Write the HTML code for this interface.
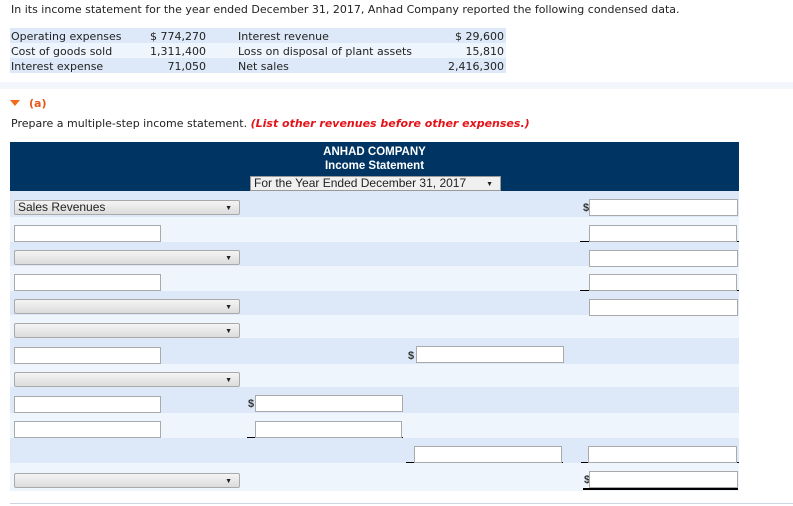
<!DOCTYPE html>
<html><head><meta charset="utf-8"><style>
*{margin:0;padding:0;box-sizing:border-box}
body{width:793px;height:506px;background:#fff;font-family:"DejaVu Sans","Liberation Sans",sans-serif;font-size:11px;color:#222;position:relative;overflow:hidden}
.a{position:absolute;white-space:nowrap}
.band{position:absolute;left:0;width:793px;top:82px;height:7px;background:#f3f7fb}
.dt{position:absolute;left:10px;width:496px;height:15px}
.r{position:absolute;left:10px;width:729px}
.sel{position:absolute;left:14px;width:226px;height:15px;border:1px solid #a9a9a9;border-radius:2px;background:linear-gradient(#f4f4f4,#dcdcdc);font-family:"Liberation Sans",sans-serif;font-size:12px;line-height:13px;padding-left:3px}
.sel:after{content:"▼";position:absolute;right:7px;top:1px;font-size:7px}
.in{position:absolute;height:17px;border:1px solid #aaa;background:#fff}
.d{position:absolute;font-size:11px;font-family:"Liberation Sans",sans-serif;font-weight:bold;color:#333}
.u{position:absolute;height:1px;background:#000}
</style></head><body>
<div class="a" style="left:11px;top:3px">In its income statement for the year ended December 31, 2017, Anhad Company reported the following condensed data.</div>
<div class="dt" style="top:28px;background:#dde9f8"></div>
<div class="dt" style="top:43px;background:#eef5fd"></div>
<div class="dt" style="top:58px;background:#dde9f8"></div>
<div class="a" style="left:11px;top:29px;line-height:15px">Operating expenses<br>Cost of goods sold<br>Interest expense</div>
<div class="a" style="left:120px;width:86px;text-align:right;top:29px;line-height:15px">$ 774,270<br>1,311,400<br>71,050</div>
<div class="a" style="left:238px;top:29px;line-height:15px">Interest revenue<br>Loss on disposal of plant assets<br>Net sales</div>
<div class="a" style="left:404px;width:100px;text-align:right;top:29px;line-height:15px">$ 29,600<br>15,810<br>2,416,300</div>
<div class="band"></div>
<div class="a" style="left:10px;top:100px;width:0;height:0;border-left:5px solid transparent;border-right:5px solid transparent;border-top:6px solid #f26b1d"></div>
<div class="a" style="left:29px;top:97px;color:#e8561a;font-weight:bold">(a)</div>
<div class="a" style="left:11px;top:117px">Prepare a multiple-step income statement. <b style="color:#e4131a;font-style:italic">(List other revenues before other expenses.)</b></div>
<div class="r" style="top:142px;height:49px;background:#003563"></div>
<div class="a" style="left:10px;width:729px;text-align:center;top:145px;color:#fff;font-family:'Liberation Sans',sans-serif;font-weight:bold;font-size:11.5px;line-height:14px">ANHAD COMPANY<br>Income Statement</div>
<div class="a" style="left:250px;top:176px;width:251px;height:15px;background:#f0f0f0;border:1px solid #999;font-family:'Liberation Sans',sans-serif;font-size:12px;line-height:13px;padding-left:3px">For the Year Ended December 31, 2017<span style="position:absolute;right:7px;top:1px;font-size:7px">▼</span></div>
<div class="r" style="top:191px;height:26px;background:#dde9f8"></div>
<div class="r" style="top:217px;height:25px;background:#eef5fd"></div>
<div class="r" style="top:242px;height:24px;background:#dde9f8"></div>
<div class="r" style="top:266px;height:25px;background:#eef5fd"></div>
<div class="r" style="top:291px;height:24px;background:#dde9f8"></div>
<div class="r" style="top:315px;height:23px;background:#eef5fd"></div>
<div class="r" style="top:338px;height:26px;background:#dde9f8"></div>
<div class="r" style="top:364px;height:23px;background:#eef5fd"></div>
<div class="r" style="top:387px;height:26px;background:#dde9f8"></div>
<div class="r" style="top:413px;height:25px;background:#eef5fd"></div>
<div class="r" style="top:438px;height:25px;background:#dde9f8"></div>
<div class="r" style="top:463px;height:28px;background:#eef5fd"></div>
<div class="a" style="left:10px;top:503px;width:783px;height:1px;background:#ccd6e3"></div>

<div class="sel" style="top:200px">Sales Revenues</div>
<div class="d" style="left:583px;top:202px">$</div><div class="in" style="left:589px;top:199px;width:149px"></div>

<div class="in" style="left:14px;top:225px;width:147px"></div>
<div class="u" style="left:580px;top:241px;width:159px"></div><div class="in" style="left:589px;top:225px;width:148px"></div>

<div class="sel" style="top:250px"></div>
<div class="in" style="left:589px;top:250px;width:149px"></div>

<div class="in" style="left:14px;top:274px;width:147px"></div>
<div class="u" style="left:580px;top:290px;width:159px"></div><div class="in" style="left:589px;top:274px;width:148px"></div>

<div class="sel" style="top:299px"></div>
<div class="in" style="left:589px;top:299px;width:149px"></div>

<div class="sel" style="top:323px"></div>

<div class="in" style="left:14px;top:347px;width:147px"></div>
<div class="d" style="left:408px;top:350px">$</div><div class="in" style="left:416px;top:346px;width:148px"></div>

<div class="sel" style="top:372px"></div>

<div class="in" style="left:14px;top:396px;width:147px"></div>
<div class="d" style="left:248px;top:398px">$</div><div class="in" style="left:255px;top:395px;width:148px"></div>

<div class="in" style="left:14px;top:421px;width:147px"></div>
<div class="u" style="left:247px;top:437px;width:156px"></div><div class="in" style="left:255px;top:421px;width:147px"></div>

<div class="u" style="left:406px;top:462px;width:157px"></div><div class="in" style="left:414px;top:446px;width:148px"></div>
<div class="u" style="left:581px;top:462px;width:158px"></div><div class="in" style="left:588px;top:446px;width:149px"></div>

<div class="sel" style="top:473px"></div>
<div class="d" style="left:584px;top:474px">$</div><div class="in" style="left:589px;top:471px;width:149px"></div>
<div class="u" style="left:583px;top:488px;width:155px;height:2px"></div>
</body></html>
